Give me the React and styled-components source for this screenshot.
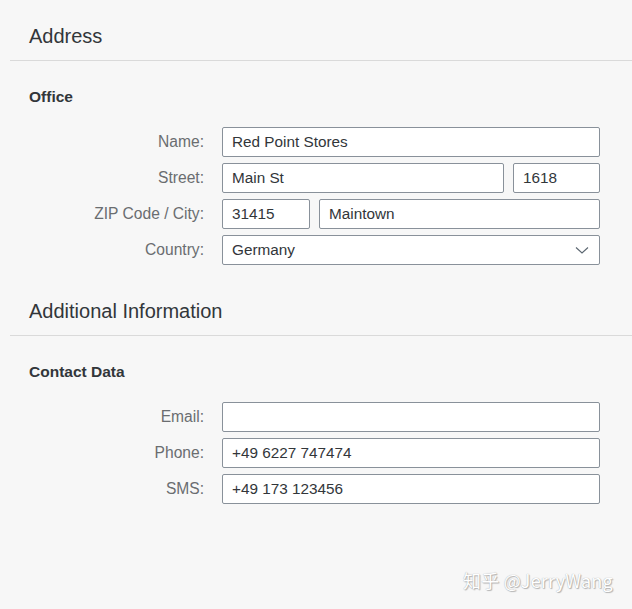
import React from "react";
import styled, { createGlobalStyle } from "styled-components";

const Global = createGlobalStyle`
  html, body { margin: 0; padding: 0; background: #f7f7f7; }
  body { font-family: "Liberation Sans", Arial, sans-serif; color: #32363a; }
`;

const Page = styled.div`
  position: relative;
  width: 632px;
  height: 609px;
  padding-top: 12px;
  box-sizing: border-box;
  overflow: hidden;
`;

const Section = styled.section`
  margin-left: 10px;
  margin-bottom: ${(p) => p.$gap || 0}px;
`;

const Title = styled.h2`
  margin: 0;
  padding: 12px 0 12px 19px;
  font-size: 20px;
  line-height: 24px;
  font-weight: normal;
  color: #32363a;
  border-bottom: 1px solid #dadada;
`;

const SubTitle = styled.h3`
  margin: 0;
  padding: 26px 0 0 19px;
  font-size: 15.5px;
  line-height: 20px;
  font-weight: bold;
  color: #32363a;
`;

const Form = styled.div`
  display: grid;
  grid-template-columns: 194px 378px;
  column-gap: 18px;
  row-gap: 6px;
  margin-top: 20px;
`;

const Label = styled.label`
  text-align: right;
  font-size: 15.6px;
  line-height: 30px;
  color: #6a6d70;
  white-space: nowrap;
`;

const Fields = styled.div`
  display: flex;
  gap: 9px;
`;

const Input = styled.div`
  box-sizing: border-box;
  height: 30px;
  width: ${(p) => (p.$w ? `${p.$w}px` : "auto")};
  flex: ${(p) => (p.$w ? "none" : "1")};
  padding: 0 9px;
  background: #fff;
  border: 1px solid #89919a;
  border-radius: 2px;
  font-size: 15.3px;
  line-height: 28px;
  color: #32363a;
  display: flex;
  align-items: center;
  justify-content: space-between;
`;

const Chevron = styled.svg`
  width: 14px;
  height: 14px;
  margin-right: 1px;
`;

const Watermark = styled.div`
  position: absolute;
  left: 463px;
  top: 568px;
  font-family: "Noto Sans CJK SC", "Liberation Sans", sans-serif;
  font-size: 18px;
  line-height: 24px;
  color: #ffffff;
  text-shadow: 0 0 1px #9a9a9a, 1px 1px 1px #b5b5b5;
  letter-spacing: 0.2px;
`;

const Row = ({ label, children }) => (
  <>
    <Label>{label}</Label>
    <Fields>{children}</Fields>
  </>
);

export default function App() {
  return (
    <>
      <Global />
      <Page>
        <Section $gap={22}>
          <Title>Address</Title>
          <SubTitle>Office</SubTitle>
          <Form>
            <Row label="Name:">
              <Input>Red Point Stores</Input>
            </Row>
            <Row label="Street:">
              <Input>Main St</Input>
              <Input $w={87}>1618</Input>
            </Row>
            <Row label="ZIP Code / City:">
              <Input $w={88}>31415</Input>
              <Input>Maintown</Input>
            </Row>
            <Row label="Country:">
              <Input>
                Germany
                <Chevron viewBox="0 0 14 14" fill="none">
                  <path d="M1 4.5 L7 10 L13 4.5" stroke="#5b6670" strokeWidth="1.1" />
                </Chevron>
              </Input>
            </Row>
          </Form>
        </Section>
        <Section>
          <Title>Additional Information</Title>
          <SubTitle>Contact Data</SubTitle>
          <Form>
            <Row label="Email:">
              <Input />
            </Row>
            <Row label="Phone:">
              <Input>+49 6227 747474</Input>
            </Row>
            <Row label="SMS:">
              <Input>+49 173 123456</Input>
            </Row>
          </Form>
        </Section>
        <Watermark>知乎 @JerryWang</Watermark>
      </Page>
    </>
  );
}
